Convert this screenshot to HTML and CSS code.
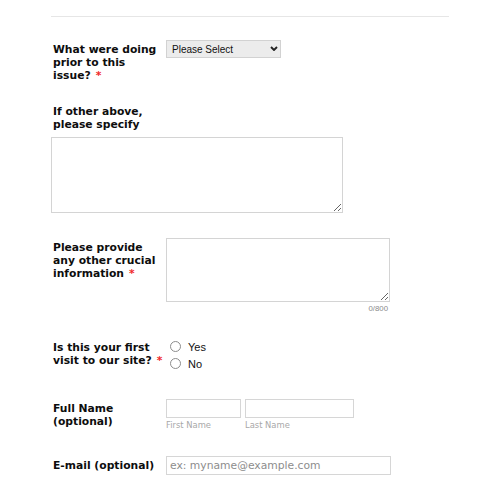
FILE: index.html
```html
<!DOCTYPE html>
<html lang="en">
<head>
<meta charset="utf-8">
<title>Form</title>
<link rel="stylesheet" href="styles.css">
</head>
<body>
<div class="page">
  <div class="divider"></div>
  <form class="form">
    <div class="row row-first">
      <label class="lbl">What were doing prior to this <span class="last">issue?<span class="req">*</span></span></label>
      <div class="field select-wrap">
        <select class="sel"><option>Please Select</option></select>
        <svg class="chev" width="8" height="5" viewBox="0 0 8 5"><path d="M1 1 L4 4 L7 1" fill="none" stroke="#222" stroke-width="1.9"/></svg>
      </div>
    </div>

    <div class="row row-stack row-other">
      <label class="lbl">If other above, please specify</label>
      <textarea class="ta ta-wide"></textarea>
    </div>

    <div class="row row-info">
      <label class="lbl">Please provide any other crucial <span class="last">information<span class="req">*</span></span></label>
      <div class="field">
        <textarea class="ta ta-info"></textarea>
        <div class="counter">0/800</div>
      </div>
    </div>

    <div class="row row-visit">
      <label class="lbl">Is this your first visit to our site?<span class="req">*</span></label>
      <div class="field radios">
        <label class="opt"><input type="radio" name="first" class="radio"><span>Yes</span></label>
        <label class="opt"><input type="radio" name="first" class="radio"><span>No</span></label>
      </div>
    </div>

    <div class="row row-name">
      <label class="lbl">Full Name (optional)</label>
      <div class="field names">
        <div class="name-part">
          <input type="text" class="inp inp-first">
          <span class="sub">First Name</span>
        </div>
        <div class="name-part">
          <input type="text" class="inp inp-last">
          <span class="sub">Last Name</span>
        </div>
      </div>
    </div>

    <div class="row row-email">
      <label class="lbl">E-mail (optional)</label>
      <div class="field">
        <input type="email" class="inp inp-email" placeholder="ex: myname@example.com">
      </div>
    </div>
  </form>
</div>
</body>
</html>
```

FILE: styles.css
```css
html, body {
  margin: 0;
  padding: 0;
  background: #fff;
}

.page {
  width: 398px;
  margin-left: 51px;
  padding-top: 16px;
  font-family: "DejaVu Sans", Verdana, sans-serif;
  color: #111;
}

.divider {
  height: 1px;
  background: #e6e6e6;
}

.form {
  display: flex;
  flex-direction: column;
}

.row {
  display: flex;
  align-items: flex-start;
}

.row-stack {
  flex-direction: column;
}

.row-first { margin-top: 23px; }
.row-other { margin-top: 20px; }
.row-info { margin-top: 25px; }
.row-visit { margin-top: 25px; }
.row-name { margin-top: 27px; }
.row-email { margin-top: 26px; }

.lbl {
  box-sizing: border-box;
  width: 115px;
  flex: none;
  padding: 3px 2px 0 2px;
  font-size: 10.75px;
  line-height: 13px;
  font-weight: bold;
  color: #0d0d0d;
}

.row-stack .lbl {
  width: 113px;
}

.last {
  white-space: nowrap;
}

.req {
  margin-left: 5px;
  color: #f0282a;
}

.field {
  display: flex;
  flex-direction: column;
}

.select-wrap {
  position: relative;
}

.sel {
  -webkit-appearance: none;
  appearance: none;
  box-sizing: border-box;
  width: 115px;
  height: 18px;
  margin: 0;
  padding: 0 0 0 5px;
  border: 1px solid #d2d2d2;
  border-radius: 0;
  background: #ececec;
  font-family: "Liberation Sans", Arial, sans-serif;
  font-size: 10px;
  color: #111;
}

.chev {
  position: absolute;
  left: 104px;
  top: 6px;
  pointer-events: none;
}

.ta {
  display: block;
  box-sizing: border-box;
  margin: 0;
  padding: 2px;
  border: 1px solid #d4d4d4;
  border-radius: 0;
  background: #fff;
  font-family: "DejaVu Sans", Verdana, sans-serif;
  font-size: 11px;
}

.ta-wide {
  width: 292px;
  height: 76px;
  margin-top: 6px;
}

.ta-info {
  width: 224px;
  height: 64px;
}

.counter {
  margin-top: 2px;
  padding-right: 2px;
  text-align: right;
  font-family: "Liberation Sans", Arial, sans-serif;
  font-size: 7.8px;
  line-height: 9px;
  color: #8a8a8a;
}

.radios {
  padding-left: 4px;
}

.opt {
  display: flex;
  align-items: center;
  height: 17px;
  font-family: "Liberation Sans", Arial, sans-serif;
  font-size: 11px;
  color: #111;
}

.radio {
  -webkit-appearance: none;
  appearance: none;
  box-sizing: border-box;
  width: 11px;
  height: 11px;
  margin: 0 7px 0 0;
  border: 1px solid #8c8c8c;
  border-radius: 50%;
  background: #fff;
}

.names {
  flex-direction: row;
  gap: 4px;
}

.name-part {
  display: flex;
  flex-direction: column;
}

.inp {
  box-sizing: border-box;
  height: 19px;
  margin: 0;
  padding: 0 3px;
  border: 1px solid #d6d6d6;
  border-radius: 0;
  background: #fff;
  font-family: "DejaVu Sans", Verdana, sans-serif;
  font-size: 10.75px;
  color: #111;
}

.inp-first { width: 75px; }
.inp-last { width: 109px; }
.inp-email { width: 225px; }

.inp::placeholder {
  color: #8d8d8d;
}

.sub {
  margin-top: 2px;
  font-size: 8.4px;
  line-height: 10px;
  color: #a8a8a8;
}
```
